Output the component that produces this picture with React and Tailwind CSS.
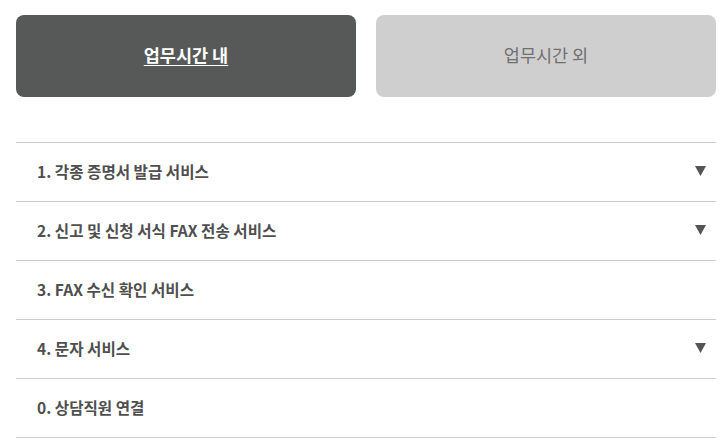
import React, { useState } from "react";

const items = [
  { label: "1. 각종 증명서 발급 서비스", sub: true },
  { label: "2. 신고 및 신청 서식 FAX 전송 서비스", sub: true },
  { label: "3. FAX 수신 확인 서비스", sub: false },
  { label: "4. 문자 서비스", sub: true },
  { label: "0. 상담직원 연결", sub: false },
];

export default function App() {
  const [tab, setTab] = useState("in");

  return (
    <div
      className="w-full min-h-screen bg-white pl-4 pr-[10px] pt-[15px]"
      style={{ fontFamily: '"Noto Sans CJK KR", "Noto Sans", sans-serif' }}
    >
      {/* tabs */}
      <div className="grid grid-cols-2 gap-5">
        <button
          onClick={() => setTab("in")}
          className={`h-[82px] rounded-lg text-[17.5px] pb-[2px] ${
            tab === "in"
              ? "bg-[#575958] text-white font-bold underline underline-offset-[3px]"
              : "bg-[#cfcfcf] text-[#707070]"
          }`}
        >
          업무시간 내
        </button>
        <button
          onClick={() => setTab("out")}
          className={`h-[82px] rounded-lg text-[17.5px] pb-[2px] ${
            tab === "out"
              ? "bg-[#575958] text-white font-bold underline underline-offset-[3px]"
              : "bg-[#cfcfcf] text-[#707070]"
          }`}
        >
          업무시간 외
        </button>
      </div>

      {/* menu list */}
      <ul className="mt-[45px] border-b border-[#cccccc]">
        {items.map((item) => (
          <li
            key={item.label}
            className="h-[59px] border-t border-[#cccccc] flex items-center justify-between pl-[21px] pr-[10px]"
          >
            <span className="text-[15.6px] font-bold text-[#4f4f4f]">
              {item.label}
            </span>
            {item.sub && (
              <svg width="11" height="10" viewBox="0 0 11 10" className="mb-[2px]">
                <polygon points="0,0 11,0 5.5,10" fill="#555555" />
              </svg>
            )}
          </li>
        ))}
      </ul>
    </div>
  );
}
